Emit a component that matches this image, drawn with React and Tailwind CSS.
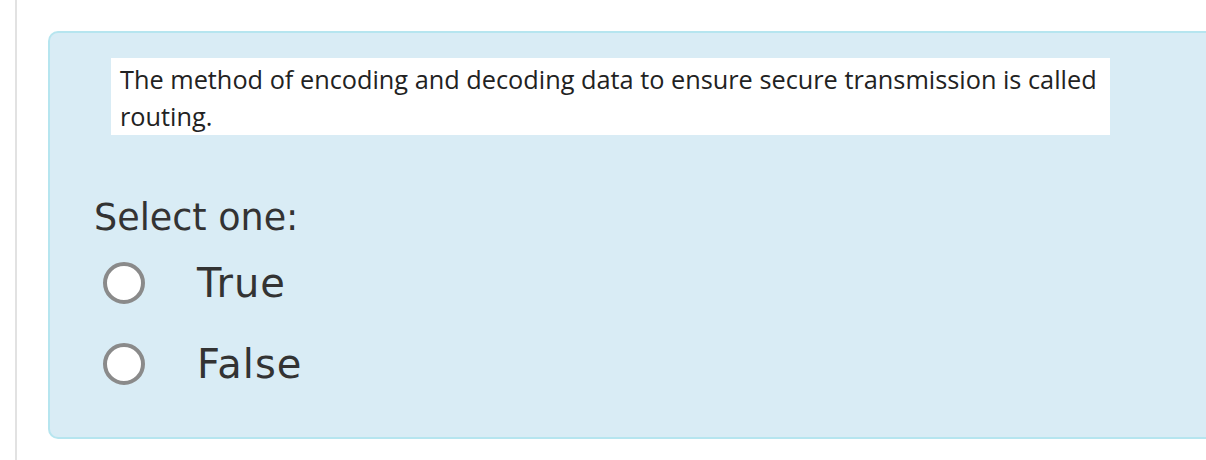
export default function App() {
  const radio = (label) => (
    <div className="flex items-center h-[42px]">
      <div className="ml-[53px] w-[42px] h-[42px] rounded-full border-[4px] border-[#8a8a8a] bg-white shrink-0" />
      <span className="ml-[52px] text-[40px] leading-none tracking-[1px] text-[#333333]" style={{ fontFamily: '"DejaVu Sans", Verdana, sans-serif' }}>
        {label}
      </span>
    </div>
  );
  return (
    <div className="w-[1206px] h-[460px] bg-white flex overflow-hidden">
      <div className="ml-[15px] w-[2px] h-full bg-[#e2e2e2] shrink-0" />
      <div className="pl-[31px] pt-[31px] shrink-0">
        <div className="w-[1200px] h-[408px] bg-[#d9ecf5] border-2 border-r-0 border-[#b6e5ef] rounded-l-[10px] flex flex-col">
          <div
            className="mt-[25px] ml-[61px] w-[999px] h-[77px] bg-white pl-[9px] pt-[3px] text-[25.3px] leading-[37px] text-[#222222]"
            style={{ fontFamily: '"Open Sans", "Noto Sans", sans-serif' }}
          >
            The method of encoding and decoding data to ensure secure transmission is called routing.
          </div>
          <div
            className="mt-[64px] ml-[44px] text-[36.5px] leading-[37px] text-[#333333]"
            style={{ fontFamily: '"DejaVu Sans", Verdana, sans-serif' }}
          >
            Select one:
          </div>
          <div className="mt-[26px] flex flex-col gap-[39px]">
            {radio("True")}
            {radio("False")}
          </div>
        </div>
      </div>
    </div>
  );
}
